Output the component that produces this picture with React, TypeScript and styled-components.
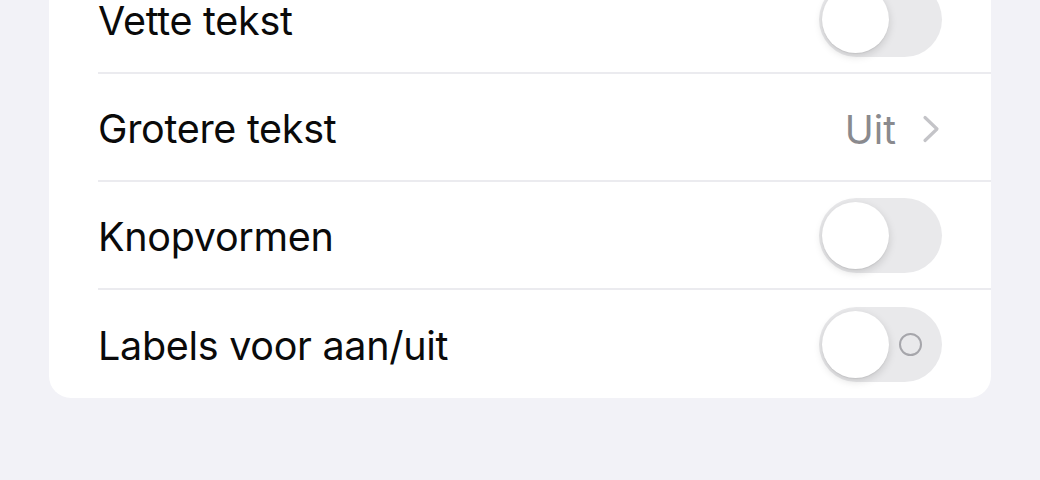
import React, { useState } from 'react';
import styled, { createGlobalStyle } from 'styled-components';

const GlobalStyle = createGlobalStyle`
  html, body {
    margin: 0;
    padding: 0;
    background: #f2f2f7;
    overflow: hidden;
  }
  body {
    font-family: 'Inter', 'Liberation Sans', sans-serif;
    -webkit-font-smoothing: antialiased;
  }
`;

const Page = styled.div`
  width: 1040px;
  height: 480px;
  background: #f2f2f7;
  padding: 0 49px;
  box-sizing: border-box;
`;

const Card = styled.div`
  margin-top: -34px;
  background: #ffffff;
  border-radius: 22px;
  padding-left: 49px;
  overflow: hidden;
`;

const Row = styled.div<{ $last?: boolean }>`
  height: 108px;
  display: flex;
  align-items: center;
  justify-content: space-between;
  padding-right: 49px;
  padding-top: 4px;
  border-bottom: ${(p) => (p.$last ? 'none' : '2px solid #ebebef')};
  box-sizing: border-box;
`;

const Label = styled.span`
  font-size: 39.5px;
  color: #0a0a0a;
  letter-spacing: -0.3px;
`;

const Detail = styled.div`
  display: flex;
  align-items: center;
  gap: 26px;
  color: #8a8a8e;
  font-size: 39px;
  margin-right: 2px;
`;

const Track = styled.button<{ $on: boolean }>`
  position: relative;
  width: 123px;
  height: 75px;
  margin-top: -4px;
  border: none;
  padding: 0;
  border-radius: 38px;
  background: ${(p) => (p.$on ? '#34c759' : '#e9e9eb')};
  cursor: pointer;
`;

const Knob = styled.span<{ $on: boolean }>`
  position: absolute;
  top: 4px;
  left: ${(p) => (p.$on ? '51px' : '3px')};
  width: 67px;
  height: 67px;
  border-radius: 50%;
  background: #ffffff;
  box-shadow: 0 3px 8px rgba(0, 0, 0, 0.15), 0 1px 1px rgba(0, 0, 0, 0.06);
`;

const OffMark = styled.span`
  position: absolute;
  top: 26px;
  right: 20px;
  width: 19px;
  height: 19px;
  border-radius: 50%;
  border: 2.5px solid #a6a6ab;
`;

const Toggle = ({ on, labels, onClick }: { on: boolean; labels?: boolean; onClick: () => void }) => (
  <Track $on={on} onClick={onClick}>
    {labels && !on && <OffMark />}
    <Knob $on={on} />
  </Track>
);

const Chevron = () => (
  <svg width="18" height="30" viewBox="0 0 18 30" fill="none">
    <path d="M3 3.5l12 11.5-12 11.5" stroke="#c4c4c8" strokeWidth="3.2" strokeLinecap="round" strokeLinejoin="round" />
  </svg>
);

export default function App() {
  const [bold, setBold] = useState(false);
  const [shapes, setShapes] = useState(false);
  const [labels, setLabels] = useState(false);

  return (
    <>
      <GlobalStyle />
      <Page>
        <Card>
          <Row>
            <Label>Vette tekst</Label>
            <Toggle on={bold} onClick={() => setBold(!bold)} />
          </Row>
          <Row>
            <Label>Grotere tekst</Label>
            <Detail>
              Uit
              <Chevron />
            </Detail>
          </Row>
          <Row>
            <Label>Knopvormen</Label>
            <Toggle on={shapes} onClick={() => setShapes(!shapes)} />
          </Row>
          <Row $last>
            <Label>Labels voor aan/uit</Label>
            <Toggle on={labels} labels onClick={() => setLabels(!labels)} />
          </Row>
        </Card>
      </Page>
    </>
  );
}
